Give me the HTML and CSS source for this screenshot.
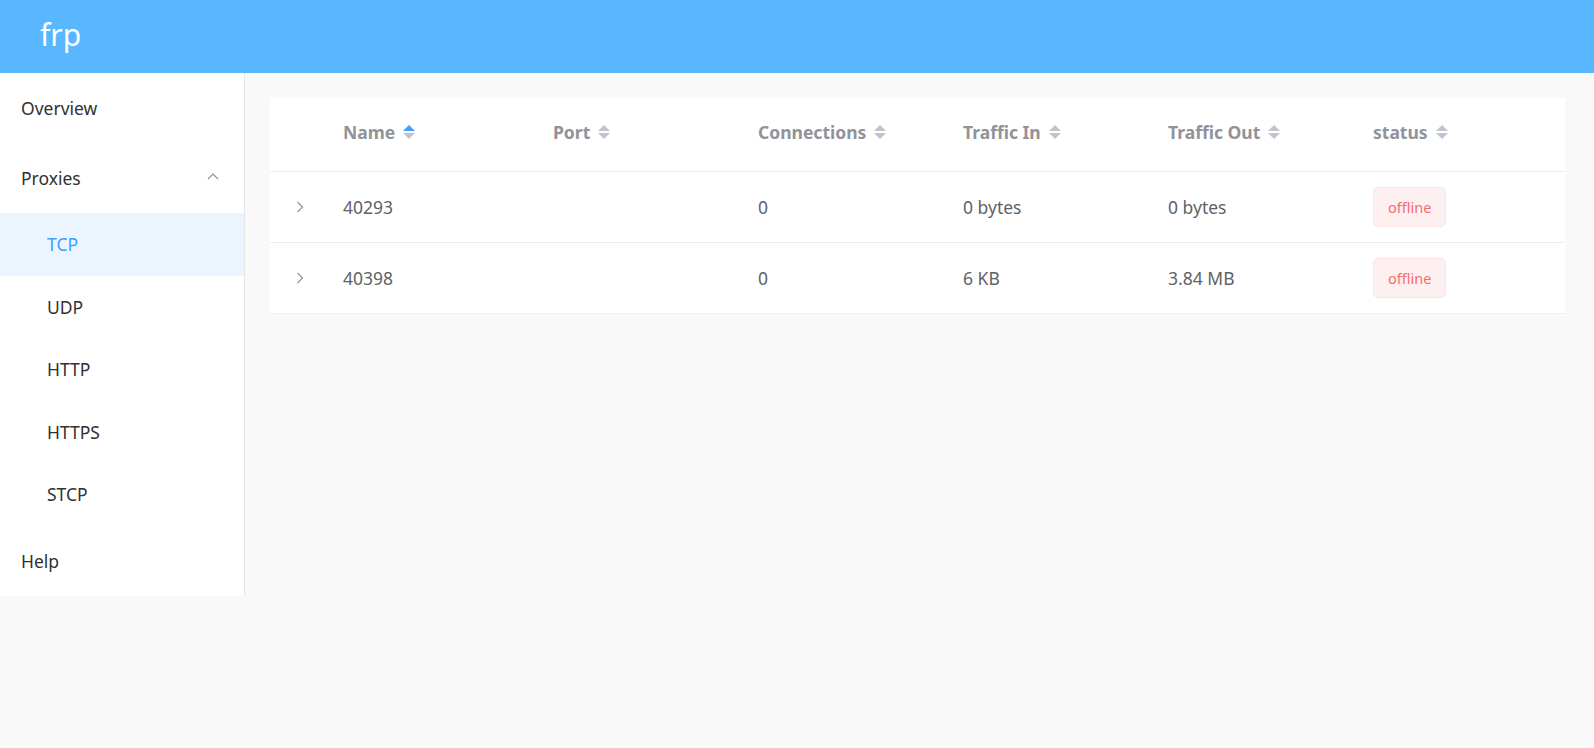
FILE: index.html
```html
<!DOCTYPE html>
<html lang="en">
<head>
<meta charset="utf-8">
<title>frp</title>
<link rel="stylesheet" href="styles.css">
</head>
<body>
<header class="topbar"><span class="brand">frp</span></header>
<div class="layout">
  <nav class="sidebar">
    <div class="menu-item">Overview</div>
    <div class="menu-item submenu-title">Proxies
      <svg class="caret" width="12" height="8" viewBox="0 0 12 8"><path d="M1 7 L6 2 L11 7" fill="none" stroke="#909399" stroke-width="1.2"/></svg>
    </div>
    <div class="menu-item sub active">TCP</div>
    <div class="menu-item sub">UDP</div>
    <div class="menu-item sub">HTTP</div>
    <div class="menu-item sub">HTTPS</div>
    <div class="menu-item sub">STCP</div>
    <div class="menu-item">Help</div>
  </nav>
  <main class="main">
    <div class="card">
      <div class="row head">
        <div class="cell"></div>
        <div class="cell">Name <svg class="sort" width="12" height="14" viewBox="0 0 12 14"><polygon points="0,6 6,0 12,6" fill="#409eff"/><polygon points="0,8 12,8 6,14" fill="#c0c4cc"/></svg></div>
        <div class="cell">Port <svg class="sort" width="12" height="14" viewBox="0 0 12 14"><polygon points="0,6 6,0 12,6" fill="#c0c4cc"/><polygon points="0,8 12,8 6,14" fill="#c0c4cc"/></svg></div>
        <div class="cell">Connections <svg class="sort" width="12" height="14" viewBox="0 0 12 14"><polygon points="0,6 6,0 12,6" fill="#c0c4cc"/><polygon points="0,8 12,8 6,14" fill="#c0c4cc"/></svg></div>
        <div class="cell">Traffic In <svg class="sort" width="12" height="14" viewBox="0 0 12 14"><polygon points="0,6 6,0 12,6" fill="#c0c4cc"/><polygon points="0,8 12,8 6,14" fill="#c0c4cc"/></svg></div>
        <div class="cell">Traffic Out <svg class="sort" width="12" height="14" viewBox="0 0 12 14"><polygon points="0,6 6,0 12,6" fill="#c0c4cc"/><polygon points="0,8 12,8 6,14" fill="#c0c4cc"/></svg></div>
        <div class="cell">status <svg class="sort" width="12" height="14" viewBox="0 0 12 14"><polygon points="0,6 6,0 12,6" fill="#c0c4cc"/><polygon points="0,8 12,8 6,14" fill="#c0c4cc"/></svg></div>
      </div>
      <div class="row">
        <div class="cell expand"><svg width="8" height="12" viewBox="0 0 8 12"><path d="M1.5 1 L6.5 6 L1.5 11" fill="none" stroke="#909399" stroke-width="1.2"/></svg></div>
        <div class="cell">40293</div>
        <div class="cell"></div>
        <div class="cell">0</div>
        <div class="cell">0 bytes</div>
        <div class="cell">0 bytes</div>
        <div class="cell"><span class="tag">offline</span></div>
      </div>
      <div class="row">
        <div class="cell expand"><svg width="8" height="12" viewBox="0 0 8 12"><path d="M1.5 1 L6.5 6 L1.5 11" fill="none" stroke="#909399" stroke-width="1.2"/></svg></div>
        <div class="cell">40398</div>
        <div class="cell"></div>
        <div class="cell">0</div>
        <div class="cell">6 KB</div>
        <div class="cell">3.84 MB</div>
        <div class="cell"><span class="tag">offline</span></div>
      </div>
    </div>
  </main>
</div>
</body>
</html>
```
FILE: styles.css
```css
html, body {
  margin: 0;
  padding: 0;
  background: #f9f9f9;
  font-family: "Noto Sans", "Open Sans", sans-serif;
}
.topbar {
  height: 73px;
  background: #58b7ff;
  display: flex;
  align-items: center;
  padding-left: 40px;
}
.brand {
  color: #fff;
  font-size: 30px;
  line-height: 73px;
  margin-top: -4px;
}
.layout {
  display: flex;
  align-items: flex-start;
}
.sidebar {
  width: 245px;
  box-sizing: border-box;
  background: #fff;
  border-right: 1px solid #e6e6e6;
  flex-shrink: 0;
}
.menu-item {
  height: 70px;
  display: flex;
  align-items: center;
  padding-left: 21px;
  padding-right: 25px;
  font-size: 17.5px;
  color: #303133;
}
.submenu-title {
  justify-content: space-between;
}
.caret {
  display: block;
  margin-top: -4px;
}
.menu-item.sub {
  height: 62.5px;
  padding-left: 47px;
}
.menu-item.active {
  color: #409eff;
  background: #ecf5ff;
}
.main {
  flex: 1;
  padding: 25px 29px 0 25px;
}
.card {
  background: #fff;
}
.row {
  display: grid;
  grid-template-columns: 60px 210px 205px 205px 205px 205px 1fr;
  height: 70px;
  border-bottom: 1px solid #ebeef5;
  font-size: 17.5px;
  color: #606266;
}
.row.head {
  height: 73px;
  color: #909399;
  font-weight: bold;
}
.row.head .cell {
  padding-bottom: 5px;
}
.cell {
  display: flex;
  align-items: center;
  padding-left: 13px;
}
.cell.expand {
  padding-left: 0;
  justify-content: center;
}
.sort {
  margin-left: 8px;
}
.tag {
  display: inline-block;
  height: 38px;
  line-height: 38px;
  padding: 0 14px;
  font-size: 14.5px;
  color: #f56c6c;
  background: #fef0f0;
  border: 1px solid #fde2e2;
  border-radius: 5px;
}
```
